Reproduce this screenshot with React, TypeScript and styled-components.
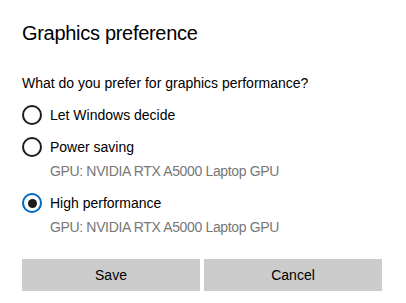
import * as React from 'react'
import styled, { createGlobalStyle } from 'styled-components'

const GlobalStyle = createGlobalStyle`
  html, body {
    margin: 0;
    padding: 0;
    background: #ffffff;
  }
  body {
    font-family: 'Liberation Sans', Arial, sans-serif;
    color: #000000;
  }
`

const Dialog = styled.div`
  width: 406px;
  height: 303px;
  box-sizing: border-box;
  padding: 19px 24px 0 22px;
  display: flex;
  flex-direction: column;
`

const Title = styled.h1`
  margin: 0;
  font-size: 20px;
  font-weight: 400;
  line-height: 28px;
  letter-spacing: -0.3px;
`

const Question = styled.p`
  margin: 26px 0 0;
  font-size: 14px;
  line-height: 20px;
`

const Options = styled.div`
  margin-top: 12px;
  display: flex;
  flex-direction: column;
  gap: 12px;
`

const Option = styled.label`
  display: flex;
  flex-direction: column;
  cursor: pointer;
`

const Row = styled.div`
  display: flex;
  align-items: center;
  gap: 8px;
  height: 20px;
  font-size: 14px;
  line-height: 20px;
`

const Radio = styled.span<{ $checked: boolean }>`
  box-sizing: border-box;
  width: 20px;
  height: 20px;
  border-radius: 50%;
  border: 2px solid ${p => (p.$checked ? '#0067c0' : '#1b1b1b')};
  display: flex;
  align-items: center;
  justify-content: center;
  flex-shrink: 0;

  &::after {
    content: '';
    display: ${p => (p.$checked ? 'block' : 'none')};
    width: 9px;
    height: 9px;
    border-radius: 50%;
    background: #1b1b1b;
  }
`

const Sub = styled.div`
  margin: 5px 0 0 28px;
  font-size: 14px;
  line-height: 19px;
  letter-spacing: -0.35px;
  color: #777777;
`

const Buttons = styled.div`
  margin-top: 22px;
  display: grid;
  grid-template-columns: 1fr 1fr;
  gap: 4px;
`

const Button = styled.button`
  height: 32px;
  border: none;
  background: #cccccc;
  font-family: inherit;
  font-size: 14px;
  color: #000000;
  cursor: pointer;
`

const choices = [
  { id: 'auto', label: 'Let Windows decide' },
  { id: 'saving', label: 'Power saving', gpu: 'GPU: NVIDIA RTX A5000 Laptop GPU' },
  { id: 'high', label: 'High performance', gpu: 'GPU: NVIDIA RTX A5000 Laptop GPU' }
]

export default function App() {
  const [selected, setSelected] = React.useState('high')
  return (
    <>
      <GlobalStyle />
      <Dialog>
        <Title>Graphics preference</Title>
        <Question>What do you prefer for graphics performance?</Question>
        <Options>
          {choices.map(c => (
            <Option key={c.id} onClick={() => setSelected(c.id)}>
              <Row>
                <Radio $checked={selected === c.id} />
                {c.label}
              </Row>
              {c.gpu && <Sub>{c.gpu}</Sub>}
            </Option>
          ))}
        </Options>
        <Buttons>
          <Button>Save</Button>
          <Button>Cancel</Button>
        </Buttons>
      </Dialog>
    </>
  )
}
